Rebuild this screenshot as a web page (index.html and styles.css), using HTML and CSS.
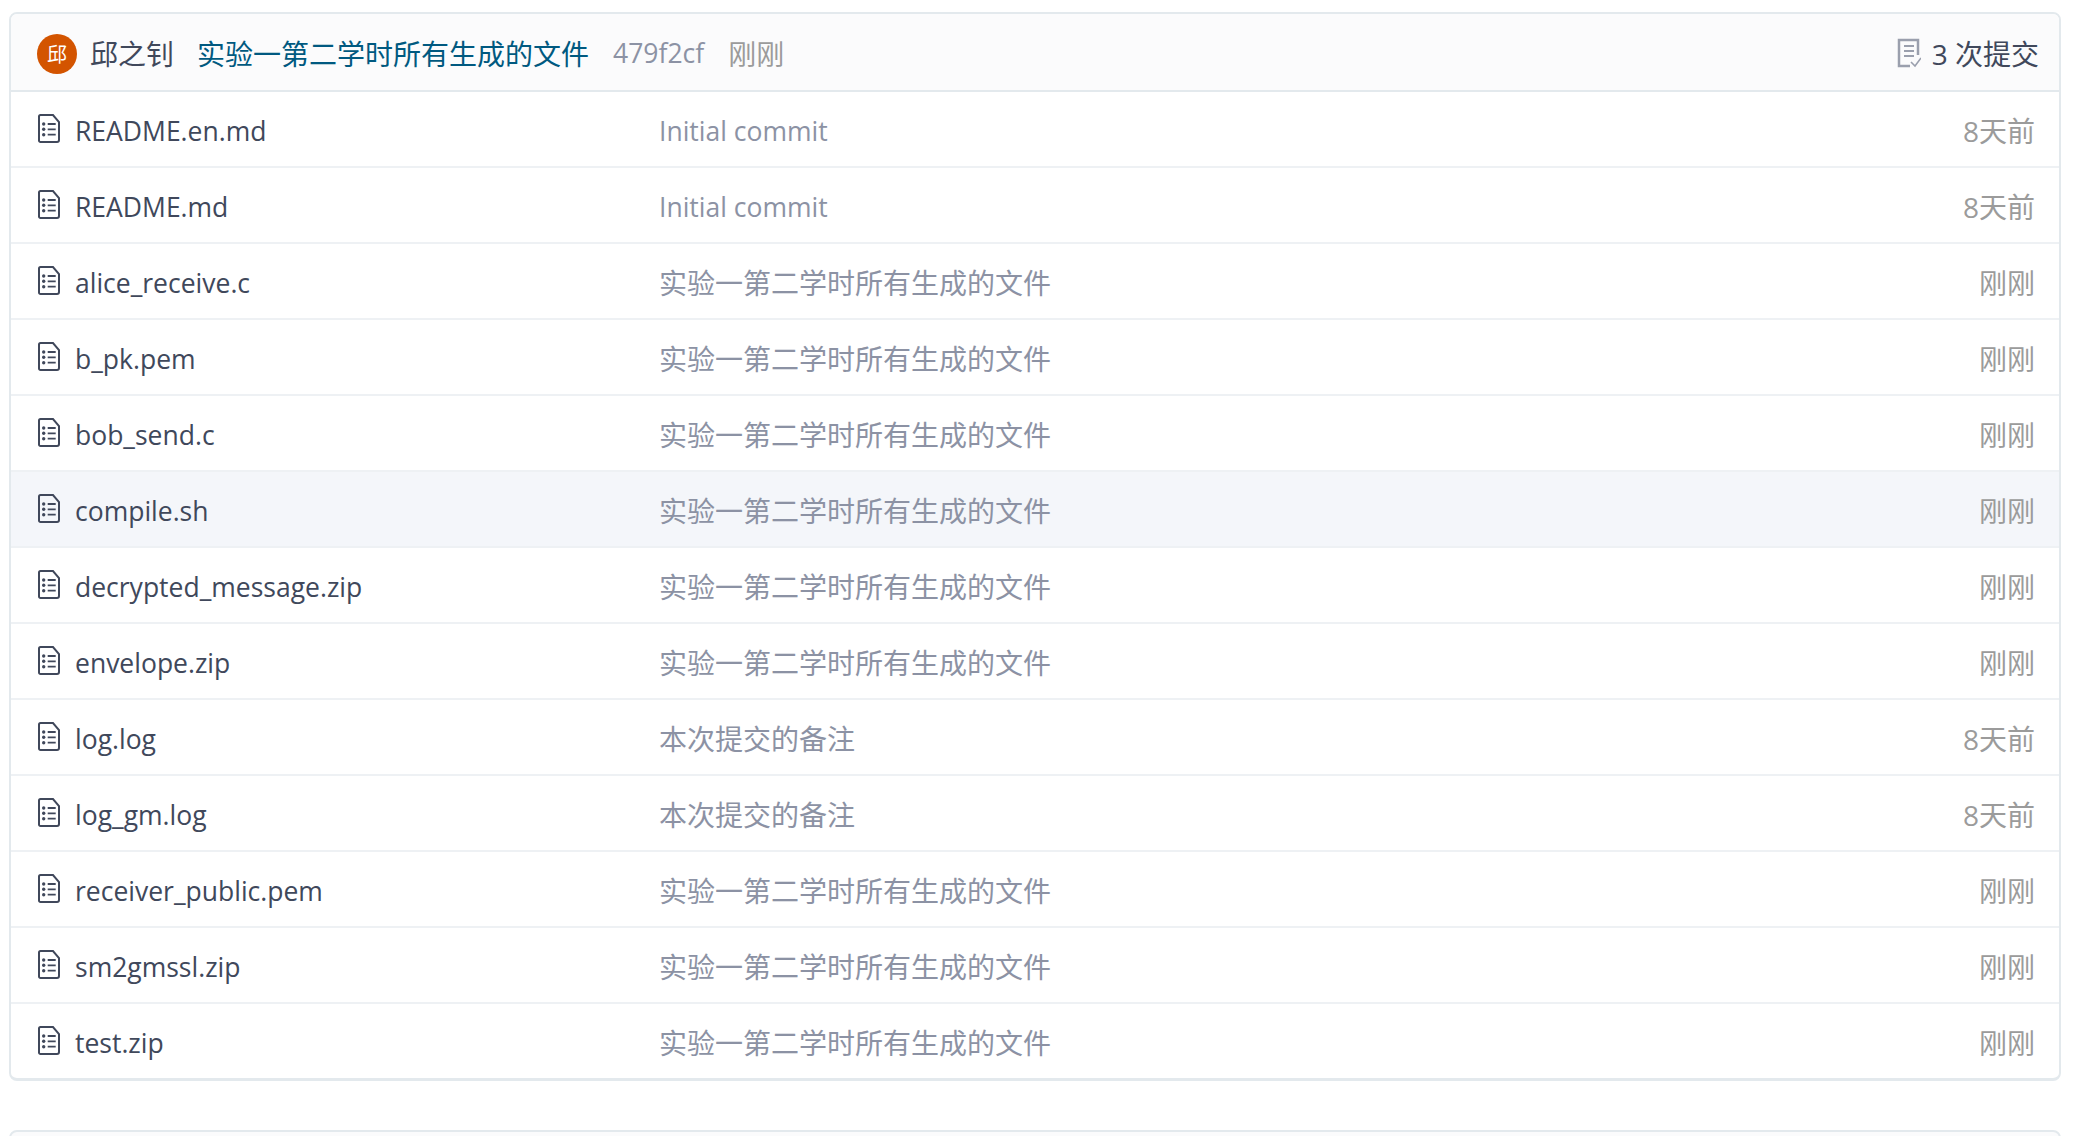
FILE: index.html
```html
<!DOCTYPE html>
<html lang="en">

<head>
    <meta charset="UTF-8">
    <meta name="viewport" content="width=device-width, initial-scale=1.0">
    <title>Files</title>
    <link rel="stylesheet" href="styles.css">
</head>

<body>
    <svg class="sprites" width="0" height="0">
        <symbol id="file-icon" viewBox="0 0 22 29">
            <path d="M2.500 1h12.500l6 7v18a2 2 0 0 1-2 2h-16.500a1.500 1.500 0 0 1-1.500-1.500v-24a1.500 1.500 0 0 1 1.500-1.500z" fill="none" stroke="currentColor" stroke-width="2"/>
            <circle cx="5.700" cy="10" r="1.700" fill="currentColor"/>
            <circle cx="5.700" cy="15.300" r="1.700" fill="currentColor"/>
            <circle cx="5.700" cy="20.700" r="1.700" fill="currentColor"/>
            <path d="M9.700 10h8M9.700 15.300h8M9.700 20.700h8" stroke="currentColor" stroke-width="1.800"/>
        </symbol>
    </svg>

    <div class="file-card">
        <div class="commit-bar">
            <span class="avatar">邱</span>
            <span class="author">邱之钊</span>
            <a href="#" class="commit-title">实验一第二学时所有生成的文件</a>
            <span class="commit-hash">479f2cf</span>
            <span class="commit-time">刚刚</span>
            <span class="commit-count">
                <svg class="count-icon" viewBox="0 0 24 30">
                    <path d="M21 17V2H2v26h11" fill="none" stroke="currentColor" stroke-width="2.500"/>
                    <path d="M7 8h10M7 13h10M7 18h10" stroke="currentColor" stroke-width="2"/>
                    <path d="M14 24l4 4 6-8" fill="none" stroke="currentColor" stroke-width="1.600"/>
                </svg>
                <span class="count-text">3 次提交</span>
            </span>
        </div>

        <div class="file-row">
            <svg class="file-icon"><use href="#file-icon"/></svg>
            <a href="#" class="file-name">README.en.md</a>
            <span class="file-msg latin">Initial commit</span>
            <span class="file-time">8天前</span>
        </div>
        <div class="file-row">
            <svg class="file-icon"><use href="#file-icon"/></svg>
            <a href="#" class="file-name">README.md</a>
            <span class="file-msg latin">Initial commit</span>
            <span class="file-time">8天前</span>
        </div>
        <div class="file-row">
            <svg class="file-icon"><use href="#file-icon"/></svg>
            <a href="#" class="file-name">alice_receive.c</a>
            <span class="file-msg">实验一第二学时所有生成的文件</span>
            <span class="file-time">刚刚</span>
        </div>
        <div class="file-row">
            <svg class="file-icon"><use href="#file-icon"/></svg>
            <a href="#" class="file-name">b_pk.pem</a>
            <span class="file-msg">实验一第二学时所有生成的文件</span>
            <span class="file-time">刚刚</span>
        </div>
        <div class="file-row">
            <svg class="file-icon"><use href="#file-icon"/></svg>
            <a href="#" class="file-name">bob_send.c</a>
            <span class="file-msg">实验一第二学时所有生成的文件</span>
            <span class="file-time">刚刚</span>
        </div>
        <div class="file-row active">
            <svg class="file-icon"><use href="#file-icon"/></svg>
            <a href="#" class="file-name">compile.sh</a>
            <span class="file-msg">实验一第二学时所有生成的文件</span>
            <span class="file-time">刚刚</span>
        </div>
        <div class="file-row">
            <svg class="file-icon"><use href="#file-icon"/></svg>
            <a href="#" class="file-name">decrypted_message.zip</a>
            <span class="file-msg">实验一第二学时所有生成的文件</span>
            <span class="file-time">刚刚</span>
        </div>
        <div class="file-row">
            <svg class="file-icon"><use href="#file-icon"/></svg>
            <a href="#" class="file-name">envelope.zip</a>
            <span class="file-msg">实验一第二学时所有生成的文件</span>
            <span class="file-time">刚刚</span>
        </div>
        <div class="file-row">
            <svg class="file-icon"><use href="#file-icon"/></svg>
            <a href="#" class="file-name">log.log</a>
            <span class="file-msg">本次提交的备注</span>
            <span class="file-time">8天前</span>
        </div>
        <div class="file-row">
            <svg class="file-icon"><use href="#file-icon"/></svg>
            <a href="#" class="file-name">log_gm.log</a>
            <span class="file-msg">本次提交的备注</span>
            <span class="file-time">8天前</span>
        </div>
        <div class="file-row">
            <svg class="file-icon"><use href="#file-icon"/></svg>
            <a href="#" class="file-name">receiver_public.pem</a>
            <span class="file-msg">实验一第二学时所有生成的文件</span>
            <span class="file-time">刚刚</span>
        </div>
        <div class="file-row">
            <svg class="file-icon"><use href="#file-icon"/></svg>
            <a href="#" class="file-name">sm2gmssl.zip</a>
            <span class="file-msg">实验一第二学时所有生成的文件</span>
            <span class="file-time">刚刚</span>
        </div>
        <div class="file-row">
            <svg class="file-icon"><use href="#file-icon"/></svg>
            <a href="#" class="file-name">test.zip</a>
            <span class="file-msg">实验一第二学时所有生成的文件</span>
            <span class="file-time">刚刚</span>
        </div>
    </div>

    <div class="next-card"></div>
</body>

</html>
```

FILE: styles.css
```css
html,
body {
    height: 1136px;
    overflow: hidden;
}

body {
    margin: 0;
    padding: 12px 32px 0 9px;
    box-sizing: border-box;
    background-color: #fff;
    font-family: 'Open Sans', 'Noto Sans CJK SC', sans-serif;
    font-size: 28px;
    color: #40485b;
}

.sprites {
    display: block;
    height: 0;
}

a {
    text-decoration: none;
    color: inherit;
}

.file-card {
    border: 2px solid #e3e9ed;
    border-bottom-width: 3px;
    border-radius: 8px;
    overflow: hidden;
}

.commit-bar {
    display: flex;
    align-items: center;
    height: 74px;
    padding: 2px 20px 0 26px;
    background-color: #fbfbfc;
    border-bottom: 2px solid #e3e9ed;
    white-space: nowrap;
}

.avatar {
    flex: none;
    width: 40px;
    height: 40px;
    margin-top: 2px;
    border-radius: 50%;
    background-color: #d35400;
    color: #fff;
    font-size: 20px;
    line-height: 42px;
    text-align: center;
}

.author {
    margin-left: 13px;
}

.commit-title {
    margin-left: 23px;
    color: #005980;
}

.commit-hash {
    margin-left: 24px;
    font-size: 26.500px;
    color: #8c92a4;
}

.commit-time {
    margin-left: 24px;
    color: #9b9b9b;
}

.commit-count {
    display: flex;
    align-items: center;
    margin-left: auto;
}

.count-icon {
    width: 24px;
    height: 30px;
    margin-right: 11px;
    color: #9a9fad;
}

.file-row {
    display: flex;
    align-items: center;
    height: 72px;
    padding: 2px 24px 0 27px;
    border-top: 2px solid #eef1f4;
    white-space: nowrap;
}

.commit-bar + .file-row {
    border-top: 0;
}

.file-row.active {
    background-color: #f4f6fa;
}

.file-icon {
    flex: none;
    width: 22px;
    height: 29px;
    margin-top: -3px;
    color: #40485b;
}

.file-name {
    width: 584px;
    margin-top: 2px;
    margin-left: 15px;
    font-size: 26.500px;
}

.file-msg {
    color: #8c92a4;
}

.file-msg.latin {
    margin-top: 2px;
    font-size: 26.500px;
}

.file-time {
    margin-left: auto;
    color: #9b9b9b;
}

.next-card {
    height: 40px;
    margin-top: 49px;
    border: 2px solid #e3e9ed;
    border-radius: 8px;
    background-color: #fbfbfc;
}
```
